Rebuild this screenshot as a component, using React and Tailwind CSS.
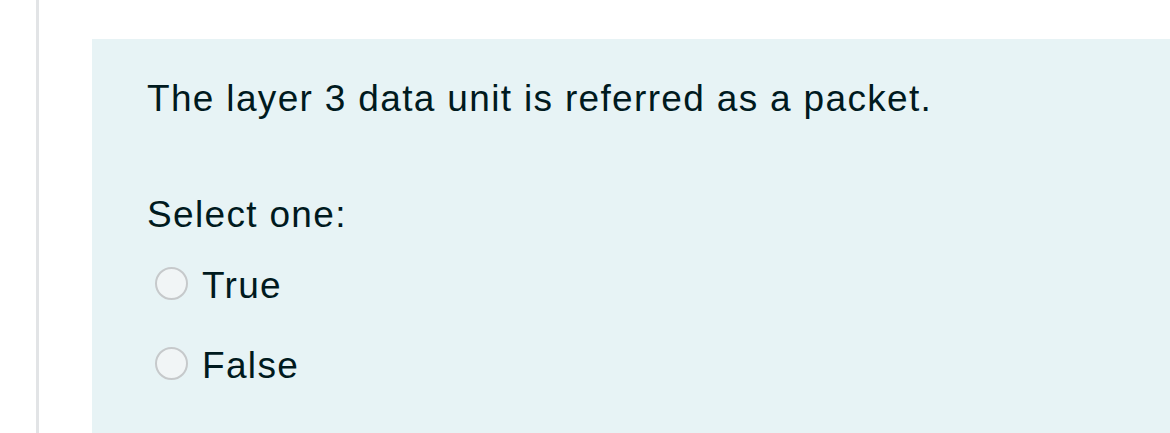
export default function App() {
  const options = ["True", "False"];

  return (
    <div
      className="flex h-[433px] w-[1170px] overflow-hidden bg-white text-[#001a1e]"
      style={{ fontFamily: '"Liberation Sans", Arial, sans-serif' }}
    >
      {/* left rule */}
      <div className="ml-[36px] h-full w-[3px] shrink-0 bg-[#e2e4e6]" />

      {/* question formulation */}
      <div className="ml-[53px] mt-[39px] flex-1 bg-[#e7f3f5] pl-[55px] pt-[38px]">
        <p className="text-[37px] leading-[44px] tracking-[0.036em]">
          The layer 3 data unit is referred as a packet.
        </p>

        <p className="mt-[72px] text-[37px] leading-[44px] tracking-[0.036em]">
          Select one:
        </p>

        <div className="mt-[27px] flex flex-col gap-[36px]">
          {options.map((opt) => (
            <label key={opt} className="flex items-start">
              <span className="ml-[8px] mt-[3px] h-[33px] w-[33px] shrink-0 rounded-full border-2 border-[#c6c9cb] bg-[#f1f5f6]" />
              <span className="ml-[14px] text-[37px] leading-[44px] tracking-[0.036em]">
                {opt}
              </span>
            </label>
          ))}
        </div>
      </div>
    </div>
  );
}
